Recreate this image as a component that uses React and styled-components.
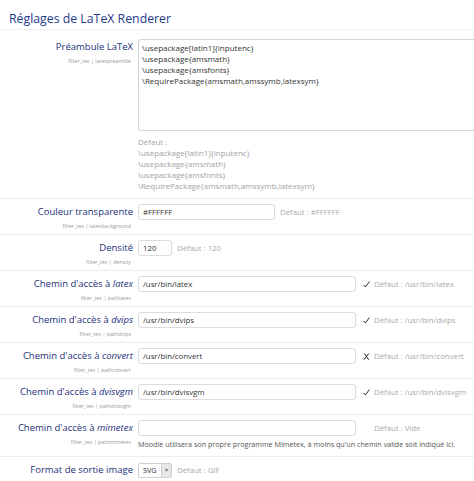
import React from 'react';
import styled, { createGlobalStyle } from 'styled-components';

const GlobalStyle = createGlobalStyle`
  html, body {
    margin: 0;
    padding: 0;
    background: #fff;
    overflow: hidden;
  }
  body {
    font-family: "Open Sans", "Liberation Sans", sans-serif;
  }
`;

const Page = styled.div`
  width: 474px;
  height: 481px;
  overflow: hidden;
`;

const Title = styled.h2`
  margin: 0;
  padding: 11px 9px 2px;
  font-size: 12.3px;
  line-height: 16px;
  font-weight: 400;
  color: #22398c;
  border-bottom: 1px solid #f1f1f1;
`;

const Form = styled.div`
  padding-top: 4px;
`;

const Row = styled.div`
  display: grid;
  grid-template-columns: 133px 1fr;
  column-gap: 5px;
  padding: 5px 0 ${p => p.$pb || 4}px;
  border-bottom: 1px solid #ececec;
`;

const LabelCol = styled.div`
  text-align: right;
`;

const Label = styled.div`
  font-size: 9.5px;
  line-height: 16px;
  color: #23307a;
  white-space: nowrap;
  em {
    font-style: italic;
  }
`;

const Sub = styled.div`
  margin-top: 2px;
  font-size: 5.3px;
  line-height: 8px;
  color: #999;
  white-space: nowrap;
  padding-right: 2px;
`;

const FieldCol = styled.div`
  min-width: 0;
`;

const Line = styled.div`
  display: flex;
  align-items: center;
  height: 16px;
  white-space: nowrap;
`;

const Input = styled.div`
  box-sizing: border-box;
  width: ${p => p.$w}px;
  height: 16px;
  border: 1px solid #dcdcdc;
  border-radius: 3px;
  padding: 0 4px;
  font-size: 7.8px;
  line-height: 14px;
  color: #333;
  flex: none;
`;

const TextArea = styled.div`
  box-sizing: border-box;
  width: 345px;
  height: 92px;
  border: 1px solid #d6d6d6;
  border-right: none;
  border-radius: 3px 0 0 3px;
  padding: 2px 3px;
  font-size: 8px;
  line-height: 11px;
  color: #333;
  white-space: nowrap;
`;

const DefaultBlock = styled.div`
  margin-top: 5px;
  font-size: 8px;
  line-height: 11px;
  color: #a3a3a3;
  white-space: nowrap;
`;

const Status = styled.span`
  width: 11px;
  margin-left: 7px;
  display: flex;
  align-items: center;
  flex: none;
`;

const Default = styled.span`
  margin-left: ${p => (p.$tight ? 5 : 0)}px;
  font-size: 7.8px;
  color: #aaa;
`;

const Desc = styled.div`
  margin: 3px 0 2px;
  font-size: 7.2px;
  line-height: 11px;
  color: #555;
  white-space: nowrap;
`;

const Select = styled.div`
  box-sizing: border-box;
  display: flex;
  width: 34px;
  height: 15px;
  border: 1px solid #cfcfcf;
  border-radius: 2px;
  font-size: 7.3px;
  color: #333;
  flex: none;
`;

const SelectValue = styled.span`
  flex: 1;
  padding-left: 4px;
  line-height: 13px;
`;

const SelectArrow = styled.span`
  width: 9px;
  background: #e6e6e6;
  border-left: 1px solid #cfcfcf;
  display: flex;
  align-items: center;
  justify-content: center;
  font-size: 6px;
  color: #777;
`;

const CheckIcon = () => (
  <svg width="7" height="7" viewBox="0 0 7 7">
    <path d="M0.8 4.2 L2.4 5.9 L6.2 0.9" fill="none" stroke="#222" strokeWidth="1" strokeLinecap="round" strokeLinejoin="round" />
  </svg>
);

const CrossIcon = () => (
  <svg width="7" height="7" viewBox="0 0 7 7">
    <path d="M1.6 0.8 C3 2.5 4.2 4.6 5.4 6.4 M5.6 0.8 C4.2 2.4 2.6 4.5 1.2 6.4" fill="none" stroke="#222" strokeWidth="1" strokeLinecap="round" />
  </svg>
);

const preamble = [
  '\\usepackage[latin1]{inputenc}',
  '\\usepackage{amsmath}',
  '\\usepackage{amsfonts}',
  '\\RequirePackage{amsmath,amssymb,latexsym}',
];

const paths = [
  { tool: 'latex', value: '/usr/bin/latex', ok: true },
  { tool: 'dvips', value: '/usr/bin/dvips', ok: true },
  { tool: 'convert', value: '/usr/bin/convert', ok: false },
  { tool: 'dvisvgm', value: '/usr/bin/dvisvgm', ok: true },
];

export default function App() {
  return (
    <Page>
      <GlobalStyle />
      <Title>Réglages de LaTeX Renderer</Title>
      <Form>
        <Row $pb={7}>
          <LabelCol>
            <Label>Préambule LaTeX</Label>
            <Sub>filter_tex | latexpreamble</Sub>
          </LabelCol>
          <FieldCol>
            <TextArea>
              {preamble.map(l => <div key={l}>{l}</div>)}
            </TextArea>
            <DefaultBlock>
              <div>Défaut :</div>
              {preamble.map(l => <div key={l}>{l}</div>)}
            </DefaultBlock>
          </FieldCol>
        </Row>

        <Row>
          <LabelCol>
            <Label>Couleur transparente</Label>
            <Sub>filter_tex | latexbackground</Sub>
          </LabelCol>
          <FieldCol>
            <Line>
              <Input $w={137}>#FFFFFF</Input>
              <Default $tight>Défaut : #FFFFFF</Default>
            </Line>
          </FieldCol>
        </Row>

        <Row>
          <LabelCol>
            <Label>Densité</Label>
            <Sub>filter_tex | density</Sub>
          </LabelCol>
          <FieldCol>
            <Line>
              <Input $w={34}>120</Input>
              <Default $tight>Défaut : 120</Default>
            </Line>
          </FieldCol>
        </Row>

        {paths.map(p => (
          <Row key={p.tool}>
            <LabelCol>
              <Label>Chemin d'accès à <em>{p.tool}</em></Label>
              <Sub>filter_tex | path{p.tool}</Sub>
            </LabelCol>
            <FieldCol>
              <Line>
                <Input $w={218}>{p.value}</Input>
                <Status>{p.ok ? <CheckIcon /> : <CrossIcon />}</Status>
                <Default>Défaut : {p.value}</Default>
              </Line>
            </FieldCol>
          </Row>
        ))}

        <Row>
          <LabelCol>
            <Label>Chemin d'accès à <em>mimetex</em></Label>
            <Sub>filter_tex | pathmimetex</Sub>
          </LabelCol>
          <FieldCol>
            <Line>
              <Input $w={218} />
              <Status />
              <Default>Défaut : Vide</Default>
            </Line>
            <Desc>Moodle utilisera son propre programme Mimetex, à moins qu'un chemin valide soit indiqué ici.</Desc>
          </FieldCol>
        </Row>

        <Row>
          <LabelCol>
            <Label>Format de sortie image</Label>
            <Sub>filter_tex | texfiltersvg</Sub>
          </LabelCol>
          <FieldCol>
            <Line>
              <Select>
                <SelectValue>SVG</SelectValue>
                <SelectArrow>▾</SelectArrow>
              </Select>
              <Default $tight>Défaut : GIF</Default>
            </Line>
          </FieldCol>
        </Row>
      </Form>
    </Page>
  );
}
